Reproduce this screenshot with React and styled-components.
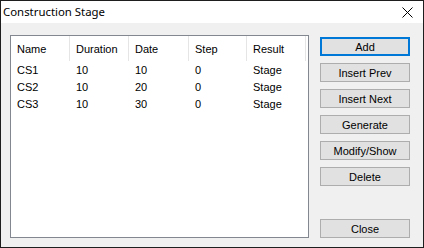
import React from 'react';
import styled, { createGlobalStyle } from 'styled-components';

const GlobalStyle = createGlobalStyle`
  html, body {
    margin: 0;
    padding: 0;
    background: #f0f0f0;
  }
  * {
    box-sizing: border-box;
  }
`

const Window = styled.div`
  width: 424px;
  height: 248px;
  border: 1px solid #1e1e1e;
  background: #f0f0f0;
  display: flex;
  flex-direction: column;
  font-family: "Liberation Sans", Arial, sans-serif;
  font-size: 11px;
  color: #000;
`

const TitleBar = styled.div`
  height: 22px;
  background: #fff;
  display: flex;
  align-items: center;
  justify-content: space-between;
  padding: 0 10px 0 2px;
`

const Title = styled.span`
  font-family: "Noto Sans", "Open Sans", sans-serif;
  font-size: 11.4px;
  line-height: 22px;
`

const Body = styled.div`
  flex: 1;
  display: flex;
  padding: 12px 0 0 9px;
`

const ListBox = styled.div`
  width: 299px;
  height: 203px;
  border: 1px solid #828790;
  background: #fff;
`

const HeaderRow = styled.div`
  display: flex;
  height: 25px;
  align-items: center;
`

const HeaderCell = styled.div`
  width: ${p => p.w}px;
  height: 100%;
  padding-left: 6px;
  padding-top: 1px;
  display: flex;
  align-items: center;
  border-right: 1px solid #e5e5e5;
`

const Row = styled.div`
  display: flex;
  height: 17px;
  align-items: center;
`

const Cell = styled.div`
  width: ${p => p.w}px;
  padding-left: 6px;
`

const ButtonColumn = styled.div`
  display: flex;
  flex-direction: column;
  gap: 7px;
  margin-left: 11px;
  padding-top: 2px;
  height: 203px;
`

const Button = styled.button`
  width: 90px;
  height: 19px;
  padding: 0;
  font-family: "Liberation Sans", Arial, sans-serif;
  font-size: 11px;
  color: #000;
  background: #e1e1e1;
  border: ${p => (p.primary ? '2px solid #0078d7' : '1px solid #adadad')};
  margin-top: ${p => (p.bottom ? 'auto' : '0')};
  cursor: default;
`

const columns = [
  { key: 'name', label: 'Name', w: 59 },
  { key: 'duration', label: 'Duration', w: 59 },
  { key: 'date', label: 'Date', w: 60 },
  { key: 'step', label: 'Step', w: 58 },
  { key: 'result', label: 'Result', w: 59 },
];

const stages = [
  { name: 'CS1', duration: 10, date: 10, step: 0, result: 'Stage' },
  { name: 'CS2', duration: 10, date: 20, step: 0, result: 'Stage' },
  { name: 'CS3', duration: 10, date: 30, step: 0, result: 'Stage' },
];

const CloseIcon = () => (
  <svg width="11" height="11" viewBox="0 0 11 11">
    <path d="M0.5 0.5 L10.5 10.5 M10.5 0.5 L0.5 10.5" stroke="#000" strokeWidth="1" />
  </svg>
);

const App = () => {
  return (
    <>
      <GlobalStyle />
      <Window>
        <TitleBar>
          <Title>Construction Stage</Title>
          <CloseIcon />
        </TitleBar>
        <Body>
          <ListBox>
            <HeaderRow>
              {columns.map(col => (
                <HeaderCell w={col.w} key={col.key}>{col.label}</HeaderCell>
              ))}
            </HeaderRow>
            {stages.map(stage => (
              <Row key={stage.name}>
                {columns.map(col => (
                  <Cell w={col.w} key={col.key}>{stage[col.key]}</Cell>
                ))}
              </Row>
            ))}
          </ListBox>
          <ButtonColumn>
            <Button primary>Add</Button>
            <Button>Insert Prev</Button>
            <Button>Insert Next</Button>
            <Button>Generate</Button>
            <Button>Modify/Show</Button>
            <Button>Delete</Button>
            <Button bottom>Close</Button>
          </ButtonColumn>
        </Body>
      </Window>
    </>
  );
}

export default App;
